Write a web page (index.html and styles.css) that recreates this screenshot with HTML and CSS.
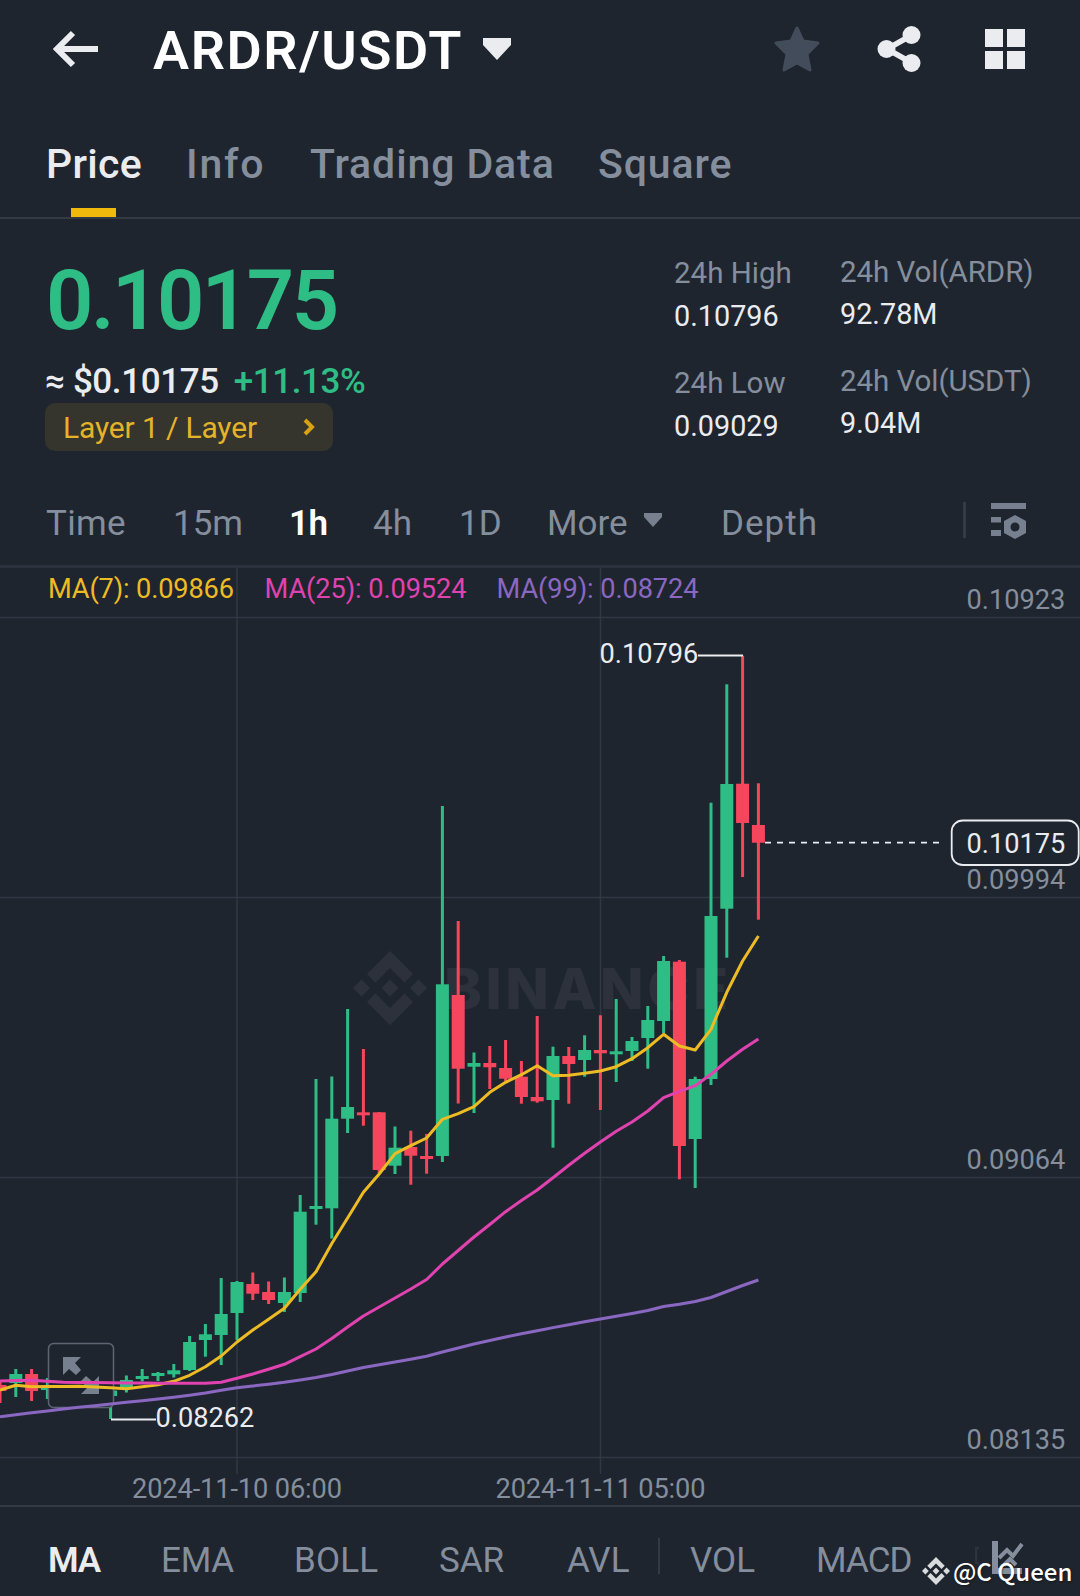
FILE: index.html
```html
<!DOCTYPE html>
<html lang="en">
<head>
  <meta charset="UTF-8">
  <title>ARDR/USDT</title>
  <link rel="stylesheet" href="styles.css">
</head>
<body>

<header class="topbar">
  <svg class="back" width="48" height="40" viewBox="0 0 48 40"><path d="M46 20H6M21 4L5 20l16 16" fill="none" stroke="#eaecef" stroke-width="6"/></svg>
  <h1>ARDR/USDT</h1>
  <svg class="caret" width="28" height="22" viewBox="0 0 28 22"><path d="M0 0h28v7L14 22 0 7z" fill="#eaecef"/></svg>
  <div class="actions">
    <svg width="46" height="48" viewBox="0 0 46 48"><path d="M23 3l6 13 15 2-11 11 3 16-13-7-13 7 3-16L2 18l15-2z" fill="#434c5a" stroke="#434c5a" stroke-width="3" stroke-linejoin="round"/></svg>
    <svg width="44" height="48" viewBox="0 0 44 48"><path d="M35 10L10 24l25 14" fill="none" stroke="#eaecef" stroke-width="5.500"/><g fill="#eaecef"><circle cx="9.500" cy="24" r="9"/><circle cx="34.500" cy="10" r="9"/><circle cx="34.500" cy="38" r="9"/></g></svg>
    <svg width="40" height="40" viewBox="0 0 40 40"><path d="M0 0h18v18H0zM22 0h18v18H22zM0 22h18v18H0zM22 22h18v18H22z" fill="#eaecef"/></svg>
  </div>
</header>

<nav class="tabs">
  <a class="tab active">Price</a>
  <a class="tab info">Info</a>
  <a class="tab trading">Trading Data</a>
  <a class="tab square">Square</a>
</nav>

<section class="summary">
  <div class="quote">
    <div class="price">0.10175</div>
    <div class="fiat"><span>≈ $0.10175</span><span class="up">+11.13%</span></div>
    <div class="tag"><span>Layer 1 / Layer</span><svg width="12" height="18" viewBox="0 0 12 18"><path d="M2 2l7 7-7 7" fill="none" stroke="#d8a312" stroke-width="4"/></svg></div>
  </div>
  <dl class="stats first">
    <dt>24h High</dt><dd>0.10796</dd>
    <dt>24h Low</dt><dd>0.09029</dd>
  </dl>
  <dl class="stats second">
    <dt>24h Vol(ARDR)</dt><dd>92.78M</dd>
    <dt>24h Vol(USDT)</dt><dd>9.04M</dd>
  </dl>
</section>

<nav class="frames">
  <a class="f-time">Time</a>
  <a class="f-15m">15m</a>
  <a class="f-1h active">1h</a>
  <a class="f-4h">4h</a>
  <a class="f-1d">1D</a>
  <a class="f-more">More<svg width="18" height="14" viewBox="0 0 18 14"><path d="M0 0h18v4l-9 10-9-10z" fill="#76808f"/></svg></a>
  <a class="f-depth">Depth</a>
  <span class="bar"></span>
  <svg class="settings" width="36" height="36" viewBox="0 0 36 36"><path d="M0 0h35v6H0zM0 14h10v5.500H0zM0 27h10v6H0z" fill="#76808f"/><path d="M24 12l11 6v12l-11 6-11-6V18zM24 19.500a4.500 4.500 0 1 0 0 9 4.500 4.500 0 0 0 0-9z" fill="#76808f" fill-rule="evenodd"/></svg>
</nav>

<svg class="chart" width="1080" height="937" viewBox="0 568 1080 937">
  <g class="grid">
    <path d="M0 617.500H1080M0 897.500H1080M0 1177.500H1080M0 1457.500H1080M237 568V1474M600.500 568V1474"/>
  </g>
  <g class="brand">
    <path d="M390 951l23 23-8.500 8.500L390 968l-14.500 14.500L367 974zM390 1025l23-23-8.500-8.500L390 1008l-14.500-14.500L367 1002zM390 979.500l8.500 8.500-8.500 8.500-8.500-8.500zM361.500 979.500l8.500 8.500-8.500 8.500-8.500-8.500zM418.500 979.500l8.500 8.500-8.500 8.500-8.500-8.500z"/>
    <text x="444" y="1008.500" textLength="284">BINANCE</text>
  </g>
  <g id="candles"></g>
  <g class="expand">
    <rect x="48.500" y="1343.500" width="65" height="64" rx="5"/>
    <path d="M63 1357h18l-6 6 6 7-5 5-7-6-6 6zM99 1394H81l6-6-6-7 5-5 7 6 6-6z"/>
  </g>
  <g id="averages"></g>
  <g class="labels legend">
    <text class="ma7" x="48" y="598" textLength="186">MA(7): 0.09866</text>
    <text class="ma25" x="264.500" y="598" textLength="202">MA(25): 0.09524</text>
    <text class="ma99" x="496.500" y="598" textLength="202">MA(99): 0.08724</text>
  </g>
  <g class="labels axis">
    <text x="966.500" y="608.500">0.10923</text>
    <text x="966.500" y="888.500">0.09994</text>
    <text x="966.500" y="1168.500">0.09064</text>
    <text x="966.500" y="1448.500">0.08135</text>
    <text x="132" y="1497.500" textLength="210">2024-11-10 06:00</text>
    <text x="495.500" y="1497.500" textLength="210">2024-11-11 05:00</text>
  </g>
  <g class="labels marks">
    <path d="M698 655.500H743M111 1419.500H156"/>
    <path d="M765 842.700H940" stroke-dasharray="6 6"/>
    <rect x="951.700" y="820.500" width="127" height="44.500" rx="11"/>
    <text x="599.500" y="663">0.10796</text>
    <text x="155.500" y="1426.500">0.08262</text>
    <text x="966.500" y="852.500">0.10175</text>
  </g>
</svg>

<nav class="indicators">
  <a class="i-ma active">MA</a>
  <a class="i-ema">EMA</a>
  <a class="i-boll">BOLL</a>
  <a class="i-sar">SAR</a>
  <a class="i-avl">AVL</a>
  <span class="bar"></span>
  <a class="i-vol">VOL</a>
  <a class="i-macd">MACD</a>
  <svg class="lines" width="50" height="34" viewBox="0 0 50 34"><path d="M4 7H1v15h3" fill="none" stroke="#2c333e" stroke-width="2.500"/><path d="M17 0h6v27h24v6H17z" fill="#848e9c"/><path d="M24 17l8-8 6 6L47 3M29 24l6-6 6 6" fill="none" stroke="#848e9c" stroke-width="4"/></svg>
</nav>

<div class="credit">
  <svg width="28" height="28" viewBox="0 0 74 74" fill="#d9dadc"><path d="M37 0l23 23-8.500 8.500L37 17 22.500 31.500 14 23zM37 74l23-23-8.500-8.500L37 57 22.500 42.500 14 51zM37 28l9 9-9 9-9-9zM9 28l9 9-9 9-9-9zM65 28l9 9-9 9-9-9z"/></svg>
  <span>@C Queen</span>
</div>

<script src="chart.js"></script>
</body>
</html>
```
FILE: styles.css
```css
* { box-sizing: border-box; margin: 0; }
body { width: 1080px; height: 1596px; overflow: hidden; position: relative; background: #1f252f; color: #eaecef; font-family: Roboto, "Liberation Sans", sans-serif; }
svg { display: block; flex: none; }
text { font-family: Roboto, "Liberation Sans", sans-serif; }

.topbar { display: flex; align-items: center; height: 98px; padding: 0 55px 0 52px; }
h1 { width: 337px; margin-left: 53px; padding-top: 4px; font-size: 54px; font-weight: 600; line-height: 98px; letter-spacing: 1.600px; color: #fff; white-space: nowrap; }
.back { margin-top: -1px; }
.caret { margin-left: -7px; }
.actions { display: flex; align-items: center; margin-left: auto; }
.actions svg + svg { margin-left: 57px; }
.actions svg:last-child { margin-left: 64px; }

.tabs { display: flex; height: 121px; padding-left: 46px; border-bottom: 2px solid #333a45; }
.tab { position: relative; padding-top: 42px; font-size: 41px; font-weight: 500; line-height: 48px; letter-spacing: 0.900px; color: #848e9c; white-space: nowrap; }
.tab.active { width: 140px; color: #eaecef; letter-spacing: 0.300px; }
.tab.active::after { content: ""; position: absolute; left: 25px; bottom: 0; width: 45px; height: 9px; background: #f0b90b; }
.tab.info { width: 124px; letter-spacing: 1.800px; }
.trading { width: 288px; }

.summary { display: flex; height: 261px; }
.quote { width: 628px; padding: 34px 0 0 46px; }
.price { height: 97px; font-size: 83px; font-weight: 600; line-height: 95px; letter-spacing: -2.500px; color: #2ebd85; }
.fiat { display: flex; gap: 15px; height: 53px; margin-left: -1px; padding-top: 11px; font-size: 35px; font-weight: 500; line-height: 41px; letter-spacing: -0.400px; white-space: nowrap; }
.up { color: #2ebd85; }
.tag { display: flex; align-items: center; width: 288px; height: 48px; margin-left: -1px; padding: 0 18px; border-radius: 10px; background: #35342d; color: #e5b32a; font-size: 30px; letter-spacing: -0.150px; }
.tag svg { margin-left: auto; }

.stats { white-space: nowrap; }
.first { width: 211px; padding: 37px 0 0 46px; }
.second { padding: 36px 0 0 1px; }
dt { height: 43px; font-size: 29.500px; line-height: 35px; color: #848e9c; }
dd { height: 67px; font-size: 28.800px; line-height: 34px; }
.second dt { height: 42px; letter-spacing: -0.050px; }

.frames { display: flex; height: 88px; padding-left: 46px; border-bottom: 3px solid #2b313d; font-size: 35px; line-height: 87px; color: #848e9c; }
.frames a { flex: none; white-space: nowrap; }
.frames .active { color: #fff; font-weight: 600; letter-spacing: -0.500px; }
.f-time { width: 127px; letter-spacing: 0.300px; }
.f-15m { width: 116px; }
.f-1h { width: 84px; }
.f-4h { width: 86px; }
.f-1d { width: 88px; }
.f-more { display: flex; width: 174px; }
.f-more svg { margin: 33px 0 0 16px; }
.f-depth { width: 100px; letter-spacing: 1px; }
.frames .bar { width: 3px; height: 36px; margin: 22px 25px 0 142px; background: #343b47; }
.settings { margin-top: 23px; }

.grid path { stroke: #323843; stroke-width: 1.500; fill: none; }
.brand { fill: #2d313c; }
.brand text { font: 800 57px Inter, sans-serif; }
.up-candle { fill: #2ebd85; }
.down-candle { fill: #f6465d; }
.expand rect { fill: #1f252f; stroke: #5d6573; stroke-width: 1.500; }
.expand path { fill: #76808f; }
#averages polyline { fill: none; stroke-width: 3; stroke-linejoin: round; }
.line7 { stroke: #edbc24; }
.line25 { stroke: #e043b0; }
.line99 { stroke: #8a68c2; }
.labels { font-size: 27.200px; }
.ma7 { fill: #edbc24; }
.ma25 { fill: #e043b0; }
.ma99 { fill: #8a68c2; }
.axis { fill: #848e9c; }
.marks { fill: #eaecef; }
.marks path, .marks rect { fill: none; stroke: #eaecef; stroke-width: 1.800; }

.indicators { display: flex; height: 91px; padding-left: 48px; border-top: 2px solid #333a45; font-size: 35px; line-height: 107px; color: #848e9c; }
.indicators a { flex: none; white-space: nowrap; }
.indicators .active { color: #eaecef; font-weight: 600; letter-spacing: -1.300px; }
.i-ma { width: 113px; }
.i-ema { width: 133px; letter-spacing: -0.200px; }
.i-boll { width: 145px; letter-spacing: 0.200px; }
.i-sar { width: 128px; }
.i-avl { width: 91px; }
.indicators .bar { width: 2px; height: 36px; margin: 31px 30px 0 0; background: #333a45; }
.i-vol { width: 126px; }
.i-macd { width: 159px; letter-spacing: -0.900px; }
.lines { margin-top: 34px; }

.credit { position: absolute; left: 922px; top: 1554px; display: flex; align-items: center; gap: 3px; color: #fff; font: 500 24px/35px "Noto Sans CJK SC", sans-serif; white-space: nowrap; text-shadow: 1px 1px 2px rgba(0,0,0,0.4); }
.credit span { margin-top: -1px; }
```
FILE: chart.js
```js
const STEP = 15.8;
const ORIGIN = 237;
const FIRST = -15;
const NS = "http://www.w3.org/2000/svg";

// high, body top, body bottom, low, rising
const candles = [
  [1382, 1385, 1391, 1403, 0], [1369, 1374, 1383, 1397, 1], [1369, 1374, 1391, 1401, 0], [1378, 1387, 1390, 1399, 1],
  [1380, 1385, 1389, 1396, 1], [1378, 1384, 1388, 1394, 0], [1380, 1386, 1389, 1396, 1], [1380, 1390.5, 1396, 1419, 1],
  [1375.5, 1380, 1388.5, 1392.5, 1], [1369, 1376, 1379, 1381.5, 1], [1372, 1373, 1376, 1381, 1], [1364, 1370.3, 1374.3, 1377.5, 1],
  [1336, 1342, 1370, 1371, 1], [1324, 1334.3, 1340, 1356.7, 1], [1278, 1314, 1335, 1365, 1], [1281, 1282, 1313, 1340, 1],
  [1272.5, 1284, 1293.7, 1300, 0], [1281.5, 1292, 1300, 1304, 0], [1277.5, 1292, 1303, 1312, 1], [1195, 1211.7, 1293, 1302, 1],
  [1079, 1206, 1209, 1224.7, 1], [1076.5, 1118.7, 1208.3, 1238.5, 1], [1009, 1107, 1118.7, 1133, 1], [1049, 1112.3, 1115.3, 1125.7, 0],
  [1112, 1112.3, 1170, 1173, 0], [1126.5, 1147.7, 1165.7, 1174, 1], [1130.7, 1147, 1155.7, 1184.7, 0], [1134, 1156, 1159, 1173.7, 0],
  [806, 984.3, 1156, 1162, 1], [921, 995, 1068.7, 1103.5, 0], [1052.5, 1063, 1066.7, 1113, 1], [1046, 1063, 1067.3, 1089, 0],
  [1040, 1068, 1078.7, 1081, 0], [1061, 1076.7, 1097, 1103.7, 0], [1016, 1097, 1101.3, 1102.7, 0], [1046.7, 1056, 1100, 1147.7, 1],
  [1047, 1056, 1064, 1103.7, 0], [1035.3, 1050, 1060, 1076.7, 1], [1015.3, 1050, 1053.3, 1110, 0], [999, 1051.3, 1054.3, 1082, 1],
  [1037, 1041, 1051, 1061, 1], [1006, 1020, 1038, 1068.7, 1], [956, 961, 1021, 1033, 1], [960, 961.7, 1146, 1179.3, 0],
  [1076.7, 1079, 1139, 1188, 1], [802.7, 916, 1079, 1085, 1], [684.3, 784, 908.7, 957.7, 1], [655.7, 783.7, 823, 877, 0],
  [783.3, 825, 842.7, 919.7, 0]
];

const ma7 = [1390, 1385.3, 1386.7, 1386.5, 1386.5, 1386.3, 1387, 1387.7, 1388.7, 1386.7, 1384.7, 1381.3, 1375.3, 1366.7, 1356, 1342, 1330, 1319.3, 1308.3, 1289.3, 1271.7, 1243.5, 1218, 1192.3, 1174, 1153.7, 1145.7, 1138, 1119.3, 1113.7, 1106.7, 1092.3, 1082.3, 1074.7, 1065.7, 1075.7, 1075.3, 1073.3, 1071, 1066.7, 1058.7, 1047.7, 1034.3, 1046, 1050, 1029.3, 992.3, 961, 936];
const ma25 = [1381, 1380.5, 1380.3, 1381.3, 1382.3, 1382.5, 1382.6, 1382.7, 1383, 1383, 1383.2, 1383.3, 1383.3, 1383.3, 1382.3, 1378.3, 1374, 1369.3, 1364.3, 1356.7, 1349, 1338.5, 1327, 1316, 1307, 1298, 1289, 1279.5, 1264, 1250.5, 1237, 1224.5, 1211.7, 1200.5, 1190, 1177.7, 1165.3, 1153.3, 1142, 1131.3, 1122, 1111, 1097.7, 1091.3, 1085.7, 1074.3, 1061, 1049.3, 1039];
const ma99 = [1416.7, 1414.7, 1412.7, 1411, 1409, 1407.3, 1405.7, 1404, 1402.3, 1400.7, 1399, 1397.3, 1395.3, 1393, 1390.3, 1387.7, 1386, 1384.2, 1382.3, 1380, 1377.5, 1374.5, 1371, 1367.5, 1364.8, 1362, 1359.2, 1356.3, 1352, 1348, 1344, 1340.5, 1337, 1333.8, 1330.7, 1327.6, 1324.7, 1321.8, 1319, 1316.2, 1313.5, 1310.5, 1306.5, 1304.3, 1301.5, 1297.5, 1291.5, 1285.5, 1280];

function xAt(n) {
  return ORIGIN + (n + FIRST) * STEP;
}

function addRect(parent, x, y, w, h, name) {
  const r = document.createElementNS(NS, "rect");
  r.setAttribute("x", x);
  r.setAttribute("y", y);
  r.setAttribute("width", w);
  r.setAttribute("height", h);
  r.setAttribute("class", name);
  parent.appendChild(r);
}

const group = document.getElementById("candles");
candles.forEach(([high, top, bottom, low, rising], n) => {
  const name = rising ? "up-candle" : "down-candle";
  addRect(group, xAt(n) - 1.5, high, 3, low - high, name);
  addRect(group, xAt(n) - 6.5, top, 13, bottom - top, name);
});

function drawAverage(values, name) {
  const line = document.createElementNS(NS, "polyline");
  line.setAttribute("points", values.map((y, n) => xAt(n) + "," + y).join(" "));
  line.setAttribute("class", name);
  document.getElementById("averages").appendChild(line);
}

drawAverage(ma99, "line99");
drawAverage(ma7, "line7");
drawAverage(ma25, "line25");
```
